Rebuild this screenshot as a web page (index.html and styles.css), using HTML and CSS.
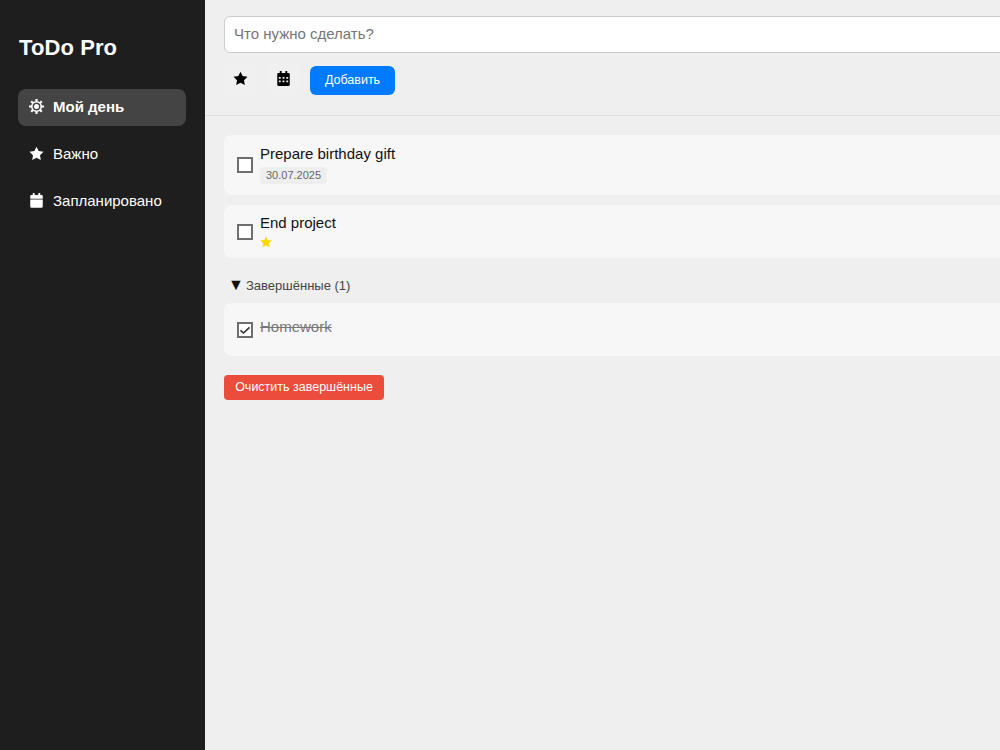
FILE: index.html
```html
<!DOCTYPE html>
<html lang="ru">
<head>
<meta charset="utf-8">
<title>ToDo Pro</title>
<link rel="stylesheet" href="styles.css">
</head>
<body>
<div class="app">
  <aside class="sidebar">
    <h1 class="logo">ToDo Pro</h1>
    <nav class="nav">
      <a class="nav-item active">
        <svg class="nav-icon" viewBox="0 0 24 24"><path fill="none" stroke="#fff" stroke-width="3.500" d="M12 0v5M12 19v5M0 12h5M19 12h5M3.500 3.500l3.500 3.500M17 17l3.500 3.500M20.500 3.500L17 7M7 17l-3.500 3.500"/><circle cx="12" cy="12" r="7.500" fill="none" stroke="#fff" stroke-width="2.400"/><circle cx="12" cy="12" r="4" fill="#fff"/></svg>
        <span>Мой день</span>
      </a>
      <a class="nav-item">
        <svg class="nav-icon" viewBox="0 0 24 24"><path fill="#fff" d="M12 1l3.400 7.100 7.800 1.100-5.600 5.400 1.300 7.800-6.900-3.700-6.900 3.700 1.300-7.800L.8 9.200l7.800-1.100z"/></svg>
        <span>Важно</span>
      </a>
      <a class="nav-item">
        <svg class="nav-icon" viewBox="0 0 24 24"><path fill="#fff" d="M6 0h3v3h6V0h3v3h2.500A1.500 1.500 0 0 1 22 4.500V9H2V4.500A1.500 1.500 0 0 1 3.500 3H6zM2 10.500h20v11a2 2 0 0 1-2 2H4a2 2 0 0 1-2-2z"/></svg>
        <span>Запланировано</span>
      </a>
    </nav>
  </aside>
  <main class="main">
    <header class="composer">
      <input class="task-input" type="text" placeholder="Что нужно сделать?">
      <div class="tools">
        <button class="tool-btn" type="button">
          <svg class="tool-icon" viewBox="0 0 24 24"><path d="M12 1l3.400 7.100 7.800 1.100-5.600 5.400 1.300 7.800-6.900-3.700-6.900 3.700 1.300-7.800L.8 9.200l7.800-1.100z"/></svg>
        </button>
        <button class="tool-btn" type="button">
          <svg class="tool-icon" viewBox="0 0 24 24"><path fill-rule="evenodd" d="M6 0h3v3h6V0h3v3h2a2 2 0 0 1 2 2v17a2 2 0 0 1-2 2H4a2 2 0 0 1-2-2V5a2 2 0 0 1 2-2h2zM4.500 9.500v3h3v-3zm6 0v3h3v-3zm6 0v3h3v-3zm-12 5.500v3h3v-3zm6 0v3h3v-3zm6 0v3h3v-3z"/></svg>
        </button>
        <button class="add-btn" type="button">Добавить</button>
      </div>
    </header>
    <section class="content">
      <div class="task">
        <span class="check"></span>
        <div class="task-body">
          <div class="task-title">Prepare birthday gift</div>
          <div class="task-meta"><span class="date">30.07.2025</span></div>
        </div>
      </div>
      <div class="task starred">
        <span class="check"></span>
        <div class="task-body">
          <div class="task-title">End project</div>
          <div class="task-meta">
            <svg class="mini-star" viewBox="0 0 24 24"><path fill="#ffd700" d="M12 1l3.400 7.100 7.800 1.100-5.600 5.400 1.300 7.800-6.900-3.700-6.900 3.700 1.300-7.800L.8 9.200l7.800-1.100z"/></svg>
          </div>
        </div>
      </div>
      <div class="done-head"><span class="arrow">▼</span>Завершённые (1)</div>
      <div class="task done">
        <span class="check checked">
          <svg viewBox="0 0 16 16"><path d="M2 8.500l4 3.500 8-7.500" fill="none" stroke="#333" stroke-width="2.200"/></svg>
        </span>
        <div class="task-body">
          <div class="task-title">Homework</div>
        </div>
      </div>
      <button class="clear-btn" type="button">Очистить завершённые</button>
    </section>
  </main>
</div>
</body>
</html>
```
FILE: styles.css
```css
* { box-sizing: border-box; }
html, body { margin: 0; height: 100%; overflow: hidden; }
body { font-family: "Liberation Sans", Arial, sans-serif; background: #f0f0f0; color: #111; }
.app { display: flex; width: 1000px; height: 750px; overflow: hidden; }
.sidebar { flex: 0 0 205px; background: #1e1e1e; color: #fff; padding: 35px 19px 0 18px; }
.logo { margin: 0 0 29px 1px; font-size: 22px; line-height: 25px; font-weight: 700; letter-spacing: 0.1px; }
.nav { display: flex; flex-direction: column; gap: 10px; }
.nav-item { display: flex; align-items: center; height: 37px; padding: 0 11px 3px; border-radius: 8px; font-size: 15px; color: #fff; }
.nav-item.active { background: #444; font-weight: 700; }
.nav-icon { width: 15px; height: 15px; margin-right: 9px; flex: none; }
.main { flex: 0 0 1100px; background: #efefef; }
.composer { padding: 16px 19px 20px; border-bottom: 1px solid #ddd; height: 116px; }
.task-input { display: block; width: 100%; height: 37px; padding: 0 9px 2px; border: 1px solid #ccc; border-radius: 6px; background: #fff; font: 15px "Liberation Sans", Arial, sans-serif; outline: none; }
.task-input::placeholder { color: #757575; opacity: 1; }
.tools { display: flex; align-items: flex-end; gap: 10px; margin-top: 10px; }
.tool-btn { display: flex; align-items: center; justify-content: center; width: 33px; height: 32px; padding: 0 0 2px; border: 0; border-radius: 6px; background: #f0f0f0; }
.tool-icon { width: 15px; height: 15px; }
.add-btn { height: 29px; width: 85px; padding: 0 0 1px; border: 0; border-radius: 6px; background: #007bff; color: #fff; font: 12.500px "Liberation Sans", Arial, sans-serif; }
.content { padding: 19px 19px 0; }
.task { display: flex; align-items: center; margin-bottom: 10px; padding: 10px 13px; border-radius: 8px; background: #f7f7f7; }
.check { flex: none; display: block; width: 16px; height: 16px; margin-right: 7px; border: 2px solid #6e6e6e; background: #fff; }
.checked svg { display: block; width: 12px; height: 12px; }
.task-title { font-size: 15px; line-height: 18px; color: #111; }
.task-meta { display: flex; align-items: flex-start; margin-top: 4px; height: 18px; }
.task.starred { padding-top: 9px; }
.task.starred .check { margin-top: 2px; }
.task.starred .task-meta { height: 12px; }
.date { padding: 1px 6px; border-radius: 4px; background: #eee; font-size: 11px; line-height: 15px; color: #666; }
.mini-star { display: block; width: 12px; height: 12px; }
.task.done { align-items: flex-start; height: 53px; margin-bottom: 19px; padding-top: 15px; }
.task.done .check { margin-top: 4px; }
.task.done .task-title { color: #777; text-decoration: line-through; }
.done-head { display: flex; align-items: center; height: 18px; margin: 18px 0 9px 4px; font-size: 13px; color: #444; }
.arrow { width: 18px; flex: none; font-size: 16px; color: #111; }
.clear-btn { display: block; width: 160px; height: 25px; padding: 0 0 1px; border: 0; border-radius: 4px; background: #eb4c3c; color: #fff; font: 12.500px "Liberation Sans", Arial, sans-serif; }
```
